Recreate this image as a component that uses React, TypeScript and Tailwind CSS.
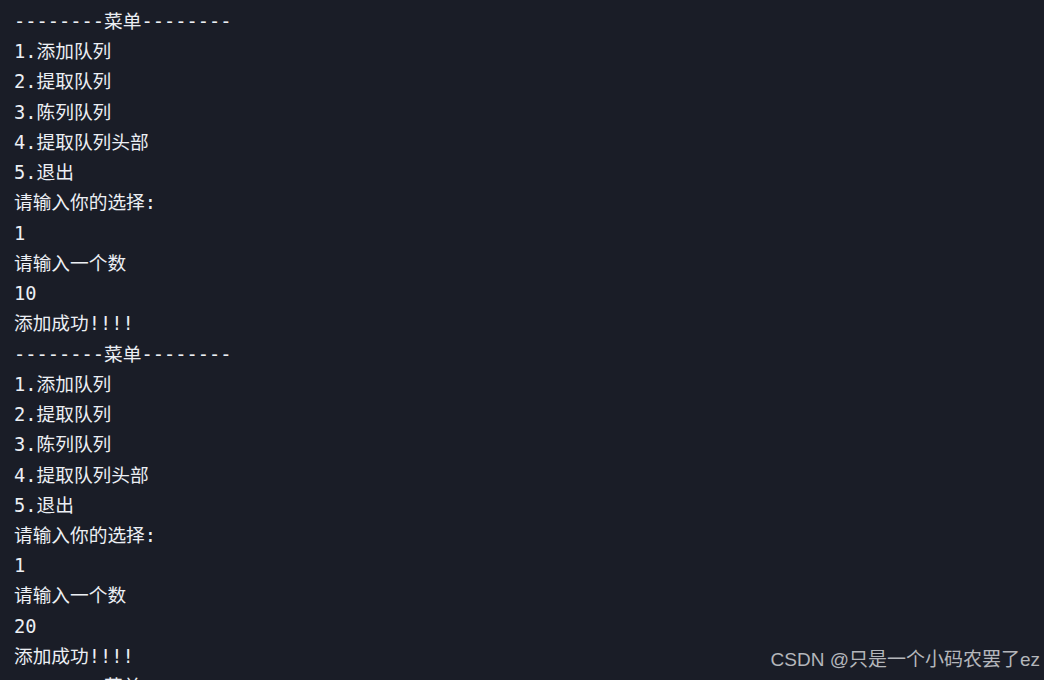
const MENU = ["--------菜单--------", "1.添加队列", "2.提取队列", "3.陈列队列", "4.提取队列头部", "5.退出", "请输入你的选择:"];

const LINES = [
  ...MENU,
  "1",
  "请输入一个数",
  "10",
  "添加成功!!!!",
  ...MENU,
  "1",
  "请输入一个数",
  "20",
  "添加成功!!!!",
  MENU[0],
];

export default function App() {
  return (
    <div className="relative flex h-[680px] w-full flex-col overflow-hidden bg-[#1a1d27]">
      <pre className="m-0 flex flex-col px-[14px] pt-[7px] font-['DejaVu_Sans_Mono','Noto_Sans_CJK_SC',monospace] text-[18.7px] leading-[30.24px] text-[#eceff4]">
        {LINES.map((line, i) => (
          <div key={i}>{line}</div>
        ))}
      </pre>

      {/* watermark */}
      <div className="absolute right-[4px] bottom-[6px] font-['Liberation_Sans','Noto_Sans_CJK_SC',sans-serif] text-[19px] text-[#b4b6bb]">
        CSDN @只是一个小码农罢了ez
      </div>
    </div>
  );
}
